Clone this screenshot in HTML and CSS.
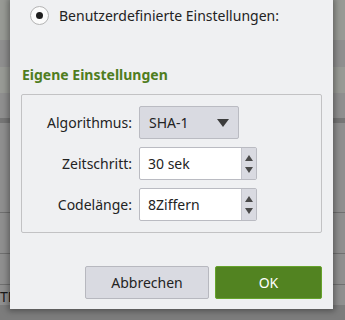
FILE: index.html
```html
<!DOCTYPE html>
<html>
<head>
<meta charset="utf-8">
<link rel="stylesheet" href="styles.css">
</head>
<body>
<div class="desk">
  <div class="band green h40"></div>
  <div class="band grey h27"></div>
  <div class="band green h26"></div>
  <div class="band grey h25"></div>
  <div class="band dark h5"></div>
  <div class="band grey h89"></div>
  <div class="band line"></div>
  <div class="band grey h40"></div>
  <div class="band line"></div>
  <div class="band grey h30"></div>
  <div class="band line"></div>
  <div class="band grey h20"><span class="peek">TE</span></div>
</div>
<div class="dialog">
  <div class="radio-row">
    <span class="radio"><span class="dot"></span></span>
    <span class="radio-label">Benutzerdefinierte Einstellungen:</span>
  </div>
  <div class="section-title">Eigene Einstellungen</div>
  <div class="group">
    <div class="form">
      <div class="lbl">Algorithmus:</div>
      <div class="combo"><span>SHA-1</span><svg class="tri" width="12" height="8" viewBox="0 0 12 8"><path d="M0 0H12L6 8Z" fill="#3c3c3c"/></svg></div>
      <div class="lbl">Zeitschritt:</div>
      <div class="spin"><span class="val">30 sek</span><span class="btns"><svg width="8" height="6" viewBox="0 0 8 6"><path d="M0 6L4 0L8 6Z" fill="#4a4a4a"/></svg><svg width="8" height="6" viewBox="0 0 8 6"><path d="M0 0H8L4 6Z" fill="#4a4a4a"/></svg></span></div>
      <div class="lbl">Codelänge:</div>
      <div class="spin"><span class="val">8Ziffern</span><span class="btns"><svg width="8" height="6" viewBox="0 0 8 6"><path d="M0 6L4 0L8 6Z" fill="#4a4a4a"/></svg><svg width="8" height="6" viewBox="0 0 8 6"><path d="M0 0H8L4 6Z" fill="#4a4a4a"/></svg></span></div>
    </div>
  </div>
  <div class="buttons">
    <button class="btn">Abbrechen</button>
    <button class="btn ok">OK</button>
  </div>
</div>
</body>
</html>
```
FILE: styles.css
```css
* { box-sizing: border-box; }
html, body { margin: 0; padding: 0; }
body {
  width: 345px; height: 320px; overflow: hidden; position: relative;
  font-family: "Noto Sans", "Open Sans", sans-serif; font-size: 14px; color: #232323;
  background: #7c7c7c;
}
.desk { display: flex; flex-direction: column; }
.band { width: 100%; background: #8f8f8f; }
.green { background: #989a95; }
.grey { background: #8f8f8f; }
.dark { background: #767676; }
.line { height: 1px; background: #707070; }
.h40 { height: 40px; } .h27 { height: 27px; } .h26 { height: 26px; }
.h25 { height: 25px; } .h5 { height: 5px; } .h89 { height: 89px; }
.h30 { height: 30px; } .h20 { height: 20px; }
.peek { display: block; padding-top: 5px; font-size: 14px; color: #1a1a1a; line-height: 14px; margin-left: 0; }

.dialog {
  position: absolute; left: 10px; top: 0; width: 323px; height: 309px;
  background: #eff0f2;
  box-shadow: 0 0 6px 2px rgba(0,0,0,0.35);
  padding: 0 11px;
  display: flex; flex-direction: column;
}
.radio-row { display: flex; align-items: center; height: 30px; padding-left: 9px; }
.radio {
  width: 19px; height: 19px; border-radius: 50%; border: 1px solid #b4b4b4; background: #fbfbfb;
  display: flex; align-items: center; justify-content: center;
}
.dot { width: 7px; height: 7px; border-radius: 50%; background: #1e1e1e; }
.radio-label { margin-left: 10px; }
.section-title { margin-top: 35px; padding-left: 1px; font-weight: bold; color: #4f7d1e; height: 29px; line-height: 20px; }
.group { border: 1px solid #c2c2c4; border-radius: 2px; height: 139px; padding: 11px 0 0 0; }
.form { display: grid; grid-template-columns: 110px auto; column-gap: 7px; row-gap: 8px; align-items: center; justify-items: start; }
.lbl { justify-self: end; }
.combo {
  width: 100px; height: 33px; background: #d9dae1; border: 1px solid #babbc2; border-radius: 2px;
  display: flex; align-items: center; justify-content: space-between; padding: 0 9px 0 9px;
}
.spin {
  width: 118px; height: 33px; background: #fff; border: 1px solid #babbc2; border-radius: 2px;
  display: flex; align-items: stretch;
}
.val { flex: 1; display: flex; align-items: center; padding-left: 8px; }
.btns { width: 15px; background: #d9dae1; border-left: 1px solid #c4c5cc; display: flex; flex-direction: column; align-items: center; justify-content: center; gap: 6px; }
.buttons { margin-top: auto; margin-bottom: 10px; display: flex; justify-content: flex-end; gap: 6px; }
.btn {
  font-family: inherit; font-size: 14px; color: #232323;
  width: 124px; height: 33px; background: #d9dae1; border: 1px solid #b7b8bf; border-radius: 2px;
}
.btn.ok { width: 107px; background: #528321; border: 1px solid #66a32c; color: #fff; }
```
